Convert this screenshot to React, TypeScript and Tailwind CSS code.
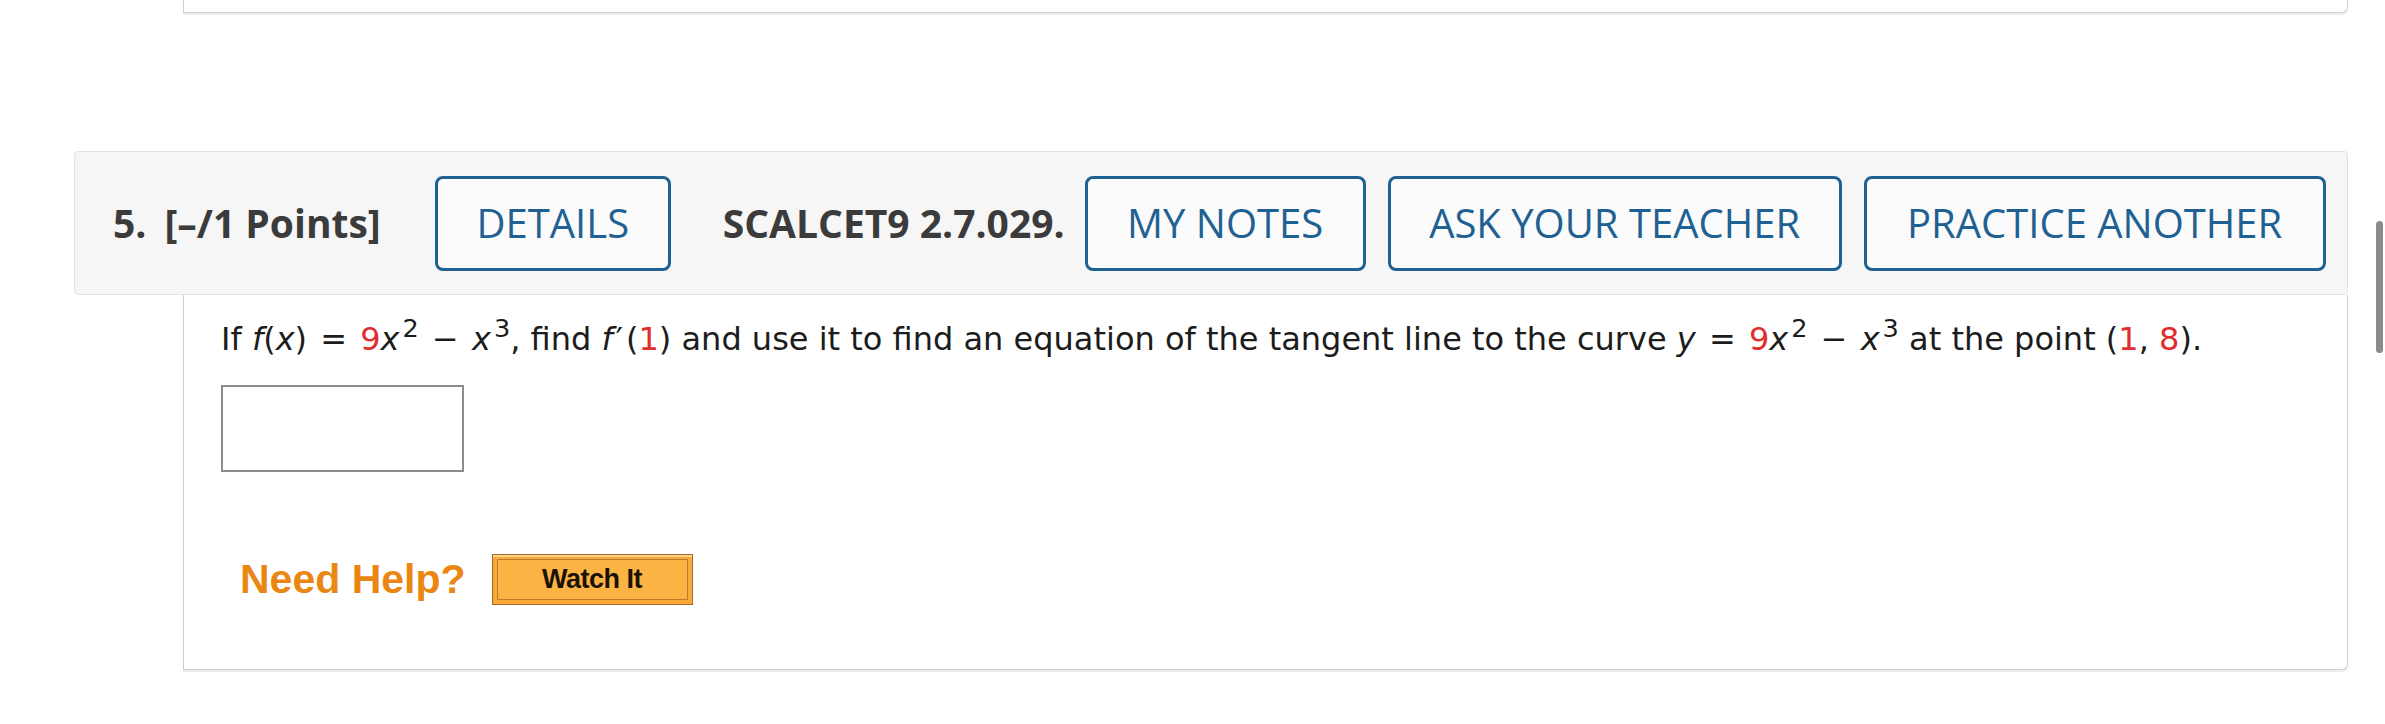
import React from "react";

const headerFont = { fontFamily: '"Open Sans", "Liberation Sans", sans-serif' };

function OutlineButton({ label, width }: { label: string; width: string }) {
  return (
    <button
      className={`${width} h-[95px] shrink-0 rounded-[8px] border-[3px] border-[#1f6192] bg-[#fbfbfb] text-[40px] text-[#1f6192] flex items-center justify-center`}
    >
      {label}
    </button>
  );
}

function Red({ children }: { children: React.ReactNode }) {
  return <span className="text-[#e12d2d]">{children}</span>;
}

function Op({ children }: { children: React.ReactNode }) {
  return <span className="px-[3px]">{children}</span>;
}

function Sup({ children }: { children: React.ReactNode }) {
  return <sup className="ml-[3px] text-[0.8em]">{children}</sup>;
}

export default function App() {
  return (
    <div className="relative w-[2385px] h-[724px] overflow-hidden bg-white">
      {/* previous question box (bottom edge only) */}
      <div className="ml-[183px] w-[2165px] h-[13px] border-l border-r border-b border-[#cfcfcf] rounded-br-[6px] shadow-[0_2px_0_#ececec]" />

      {/* question header */}
      <div
        className="mt-[138px] ml-[74px] w-[2274px] h-[144px] bg-[#f6f6f6] border border-[#e2e2e2] rounded-[4px] flex items-center pl-[38px]"
        style={headerFont}
      >
        <span className="text-[39px] font-bold text-[#3b3b3b]">5.</span>
        <span className="ml-[18px] text-[39px] font-bold text-[#3b3b3b]">[–/1 Points]</span>
        <div className="ml-[54px]">
          <OutlineButton label="DETAILS" width="w-[236px]" />
        </div>
        <span className="ml-[52px] text-[39px] font-bold text-[#3b3b3b]">SCALCET9 2.7.029.</span>
        <div className="ml-[20px] flex gap-[22px]">
          <OutlineButton label="MY NOTES" width="w-[281px]" />
          <OutlineButton label="ASK YOUR TEACHER" width="w-[454px]" />
          <OutlineButton label="PRACTICE ANOTHER" width="w-[462px]" />
        </div>
      </div>

      {/* question body */}
      <div className="ml-[183px] w-[2165px] h-[375px] border-l border-r border-b border-[#cfcfcf] rounded-br-[6px] shadow-[0_2px_0_#ececec] pl-[37px] pt-[22px]">
        <p
          className="text-[32px] leading-[44px] text-[#1c1c1c] whitespace-nowrap"
          style={{ fontFamily: '"DejaVu Sans", Verdana, sans-serif' }}
        >
          If <i>f</i>(<i>x</i>) <Op>=</Op> <Red>9</Red><i>x</i>
          <Sup>2</Sup> <Op>−</Op> <i>x</i>
          <Sup>3</Sup>, find <i>f</i>
          <span className="mx-[3px]">′</span>(<Red>1</Red>) and use it to find an equation of the tangent line to the
          curve <i>y</i> <Op>=</Op> <Red>9</Red><i>x</i>
          <Sup>2</Sup> <Op>−</Op> <i>x</i>
          <Sup>3</Sup> at the point (<Red>1</Red>, <Red>8</Red>).
        </p>

        <div className="mt-[24px] w-[243px] h-[87px] border-2 border-[#8c8c8c] bg-white" />

        <div className="mt-[82px] ml-[19px] h-[51px] flex items-center">
          <span
            className="text-[41px] leading-[51px] font-bold text-[#ea8712]"
            style={{ fontFamily: '"Liberation Sans", Arial, sans-serif' }}
          >
            Need Help?
          </span>
          <button className="ml-[26px] w-[201px] h-[51px] border border-[#a9682a] bg-[#f7a93a] p-[4px] shadow-[inset_0_2px_0_#ffd58a]">
            <div
              className="w-full h-full border border-[#c07b32] bg-[#fbb443] flex items-center justify-center text-[27px] font-bold tracking-[-0.5px] text-[#1a1206]"
              style={{ fontFamily: '"Liberation Sans", Arial, sans-serif' }}
            >
              Watch It
            </div>
          </button>
        </div>
      </div>

      {/* scrollbar */}
      <div className="absolute left-[2376px] top-[221px] w-[7px] h-[132px] rounded-full bg-[#8a8a8a]" />
    </div>
  );
}
